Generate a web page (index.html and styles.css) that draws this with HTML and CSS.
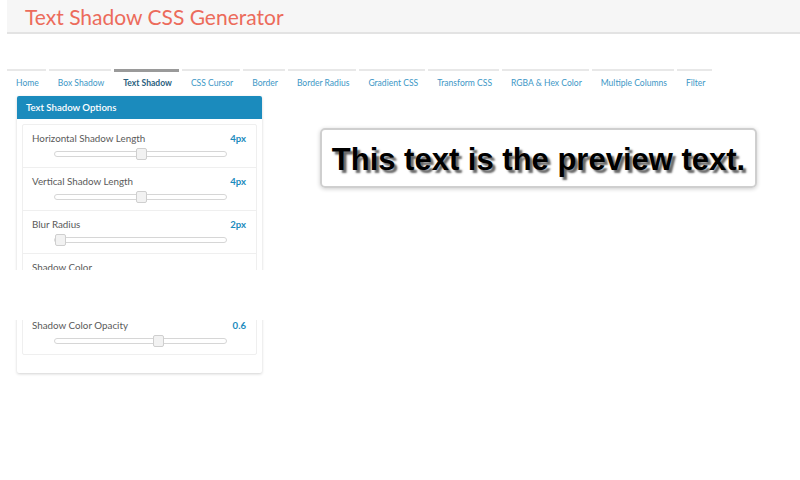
FILE: index.html
```html
<!DOCTYPE html>
<html lang="en">
<head>
<meta charset="utf-8">
<title>Text Shadow CSS Generator</title>
<link rel="stylesheet" href="styles.css">
</head>
<body>
<header class="top">
  <h1 class="title">Text Shadow CSS Generator</h1>
</header>
<nav class="tabs">
  <a class="tab">Home</a>
  <a class="tab">Box Shadow</a>
  <a class="tab active">Text Shadow</a>
  <a class="tab">CSS Cursor</a>
  <a class="tab">Border</a>
  <a class="tab">Border Radius</a>
  <a class="tab">Gradient CSS</a>
  <a class="tab">Transform CSS</a>
  <a class="tab">RGBA &amp; Hex Color</a>
  <a class="tab">Multiple Columns</a>
  <a class="tab">Filter</a>
</nav>
<main class="content">
  <section class="panel">
    <div class="panel-head">Text Shadow Options</div>
    <div class="panel-body">
      <div class="rows">
        <div class="row">
          <div class="row-top"><span class="label">Horizontal Shadow Length</span><span class="value">4px</span></div>
          <div class="slider"><span class="thumb" style="left:82px"></span></div>
        </div>
        <div class="row">
          <div class="row-top"><span class="label">Vertical Shadow Length</span><span class="value">4px</span></div>
          <div class="slider"><span class="thumb" style="left:82px"></span></div>
        </div>
        <div class="row">
          <div class="row-top"><span class="label">Blur Radius</span><span class="value">2px</span></div>
          <div class="slider"><span class="thumb" style="left:1px"></span></div>
        </div>
        <div class="row color-row">
          <div class="row-top"><span class="label">Shadow Color</span></div>
          <div class="swatch"></div>
        </div>
        <div class="row last">
          <div class="row-top"><span class="label">Shadow Color Opacity</span><span class="value">0.6</span></div>
          <div class="slider"><span class="thumb" style="left:99px"></span></div>
        </div>
      </div>
    </div>
  </section>
  <div class="preview">
    <p class="preview-text">This text is the preview text.</p>
  </div>
</main>
<div class="mask"></div>
</body>
</html>
```
FILE: styles.css
```css
html, body {
  margin: 0;
  padding: 0;
  background: #ffffff;
}
body {
  font-family: Lato, "Open Sans", sans-serif;
  position: relative;
  width: 800px;
  height: 480px;
  overflow: hidden;
}
.top {
  margin-left: 7px;
  height: 32px;
  background: #f6f6f6;
  border-bottom: 2px solid #e3e3e3;
}
.title {
  margin: 0;
  padding-left: 18px;
  font-size: 21px;
  line-height: 33px;
  font-weight: 400;
  color: #ec6b5b;
}
.tabs {
  display: flex;
  gap: 3px;
  margin: 35px 0 0 7px;
}
.tab {
  border-top: 2px solid #e8e8e8;
  padding: 6px 7px 1px 9px;
  font-size: 8.55px;
  line-height: 12px;
  color: #3d97c6;
  white-space: nowrap;
}
.tab.active {
  border-top: 3px solid #9a9a9a;
  padding-top: 5px;
  color: #2b5f7e;
  font-weight: 700;
}
.content {
  display: flex;
  align-items: flex-start;
  padding-left: 17px;
  margin-top: 6px;
}
.panel {
  width: 245px;
  background: #fff;
  box-shadow: 0 1px 3px rgba(0,0,0,0.18);
  border-radius: 2px;
}
.panel-head {
  height: 23px;
  line-height: 23px;
  padding-left: 9px;
  background: #1b8bbd;
  color: #fff;
  font-size: 9.6px;
  font-weight: 600;
  border-radius: 2px 2px 0 0;
}
.panel-body {
  padding: 5px 5px 18px;
}
.rows {
  border: 1px solid #efefef;
  border-radius: 2px;
}
.row {
  padding: 6px 10px 7px 9px;
  border-bottom: 1px solid #efefef;
}
.row.last {
  border-bottom: none;
}
.row-top {
  display: flex;
  justify-content: space-between;
  align-items: center;
  height: 14px;
}
.label {
  font-size: 9.8px;
  color: #5a5a5a;
}
.value {
  font-size: 9.6px;
  font-weight: 700;
  color: #1b8bbd;
}
.slider {
  position: relative;
  margin: 3px 0 0 22px;
  width: 173px;
  height: 12px;
}
.slider::before {
  content: "";
  position: absolute;
  left: 0;
  right: 0;
  top: 3px;
  height: 6px;
  border: 1px solid #d6d6d6;
  box-sizing: border-box;
  border-radius: 3px;
  background: #fff;
}
.thumb {
  position: absolute;
  top: 0;
  width: 11px;
  height: 12px;
  box-sizing: border-box;
  border: 1px solid #cfcfcf;
  border-radius: 2px;
  background: #f2f2f2;
}
.swatch {
  margin: 6px 0 3px 22px;
  width: 173px;
  height: 21px;
  background: #000;
}
.preview {
  margin: 32px 0 0 58px;
  width: 437px;
  height: 60px;
  box-sizing: border-box;
  padding-top: 4px;
  border: 2px solid #cfcfcf;
  border-radius: 5px;
  box-shadow: 0 1px 4px rgba(0,0,0,0.2);
  display: flex;
  align-items: center;
  justify-content: center;
}
.preview-text {
  margin: 0;
  font-family: "Liberation Sans", Arial, sans-serif;
  font-weight: 700;
  font-size: 31px;
  color: #000;
  text-shadow: 3px 3px 2px rgba(0,0,0,0.6);
  white-space: nowrap;
}
.mask {
  position: absolute;
  left: 0;
  top: 270px;
  width: 280px;
  height: 50px;
  background: #fff;
}
```
